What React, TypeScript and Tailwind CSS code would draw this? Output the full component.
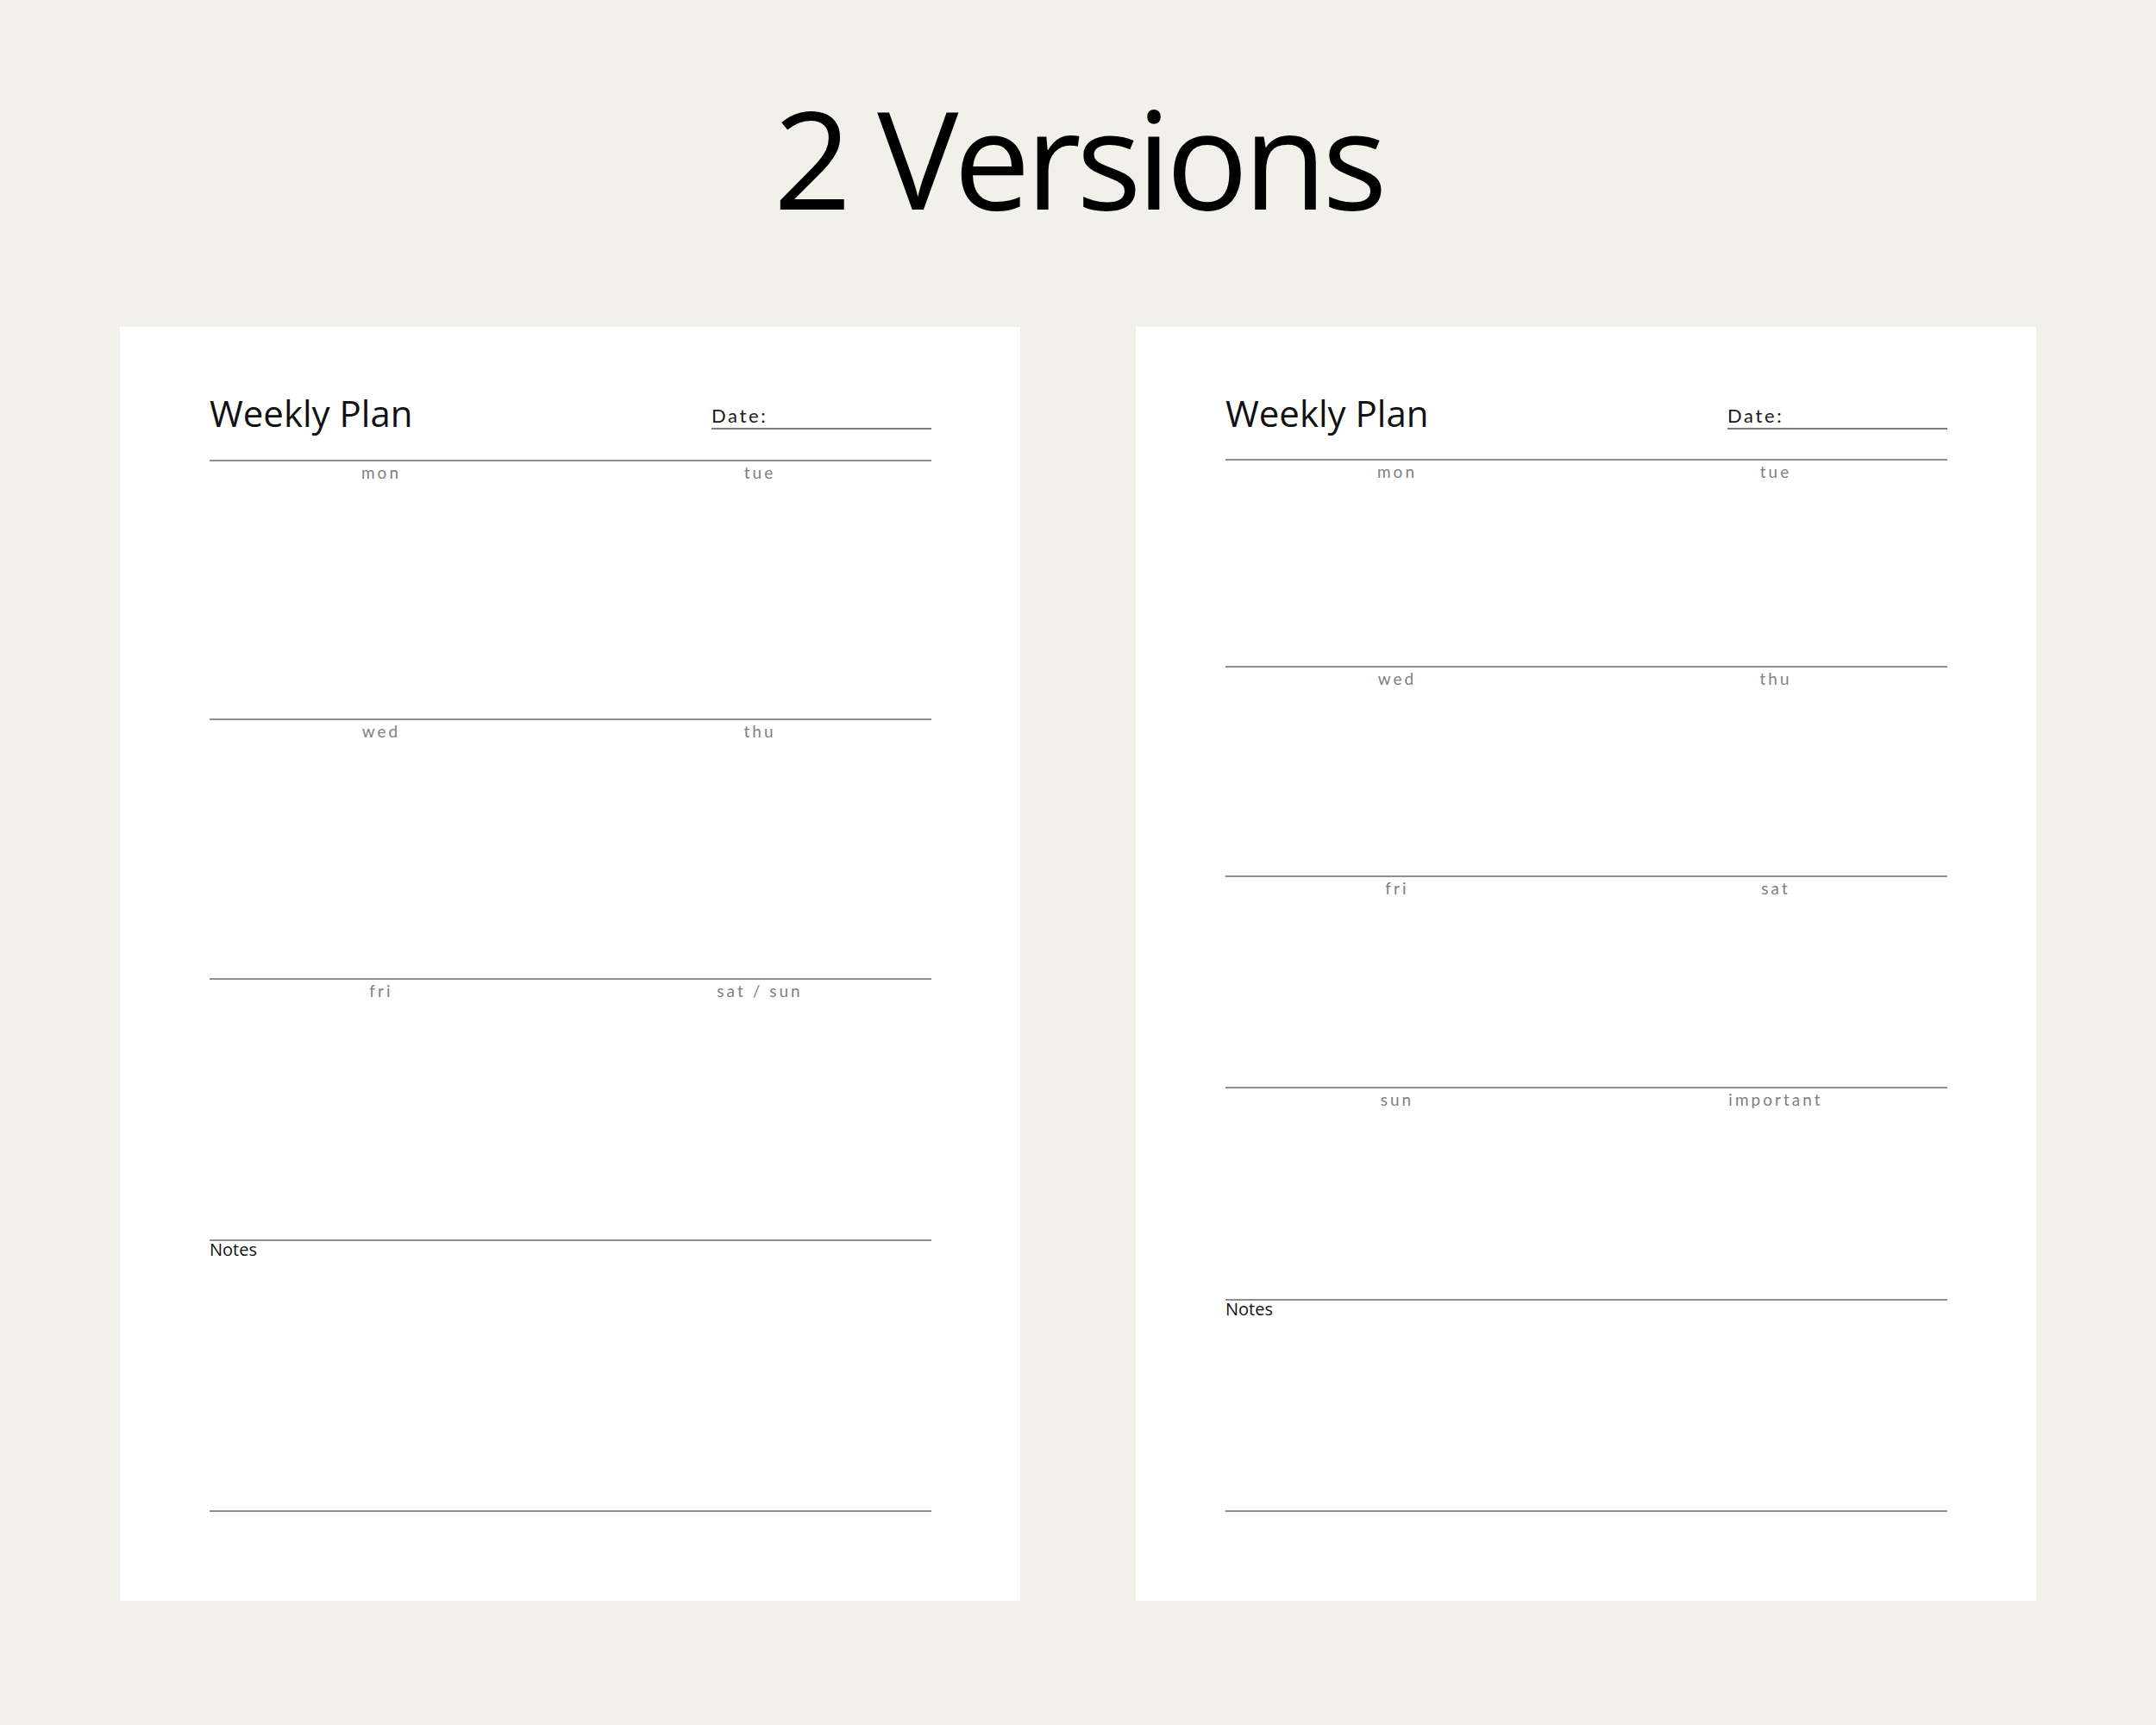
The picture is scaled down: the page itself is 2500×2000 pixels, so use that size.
const serif = "font-['Open_Sans','Noto_Sans',sans-serif]";
const label = "font-['Lato','Liberation_Sans',sans-serif]";

type Row = { h: string; left: string; right?: string; notes?: boolean };

const versionA: Row[] = [
  { h: 'h-[300px]', left: 'mon', right: 'tue' },
  { h: 'h-[301px]', left: 'wed', right: 'thu' },
  { h: 'h-[303px]', left: 'fri', right: 'sat / sun' },
  { h: 'h-[314px]', left: 'Notes', notes: true },
];

const versionB: Row[] = [
  { h: 'h-[240px]', left: 'mon', right: 'tue' },
  { h: 'h-[243px]', left: 'wed', right: 'thu' },
  { h: 'h-[245px]', left: 'fri', right: 'sat' },
  { h: 'h-[246px]', left: 'sun', right: 'important' },
  { h: 'h-[245px]', left: 'Notes', notes: true },
];

function Section({ row }: { row: Row }) {
  if (row.notes) {
    return (
      <div className={`${row.h} border-t-2 border-[#8e8e8e]`}>
        <p className={`${serif} text-[20px] leading-none text-[#111]`}>{row.left}</p>
      </div>
    );
  }
  return (
    <div className={`${row.h} border-t-2 border-[#8e8e8e]`}>
      <div
        className={`${label} mt-[3px] grid grid-cols-[398px_480px] text-[19px] leading-none tracking-[0.16em] text-[#808080]`}
      >
        <span className="text-center">{row.left}</span>
        <span className="text-center">{row.right}</span>
      </div>
    </div>
  );
}

function Planner({ rows, headerH }: { rows: Row[]; headerH: string }) {
  return (
    <div className="h-[1477px] w-[1044px] bg-white pl-[104px] pr-[103px] pt-[79px]">
      {/* Header */}
      <div className={`${headerH} flex items-start justify-between`}>
        <h2 className={`${serif} text-[42px] leading-none text-[#111]`}>Weekly Plan</h2>
        <div className="mt-[13px] w-[255px] border-b-2 border-[#7e7e7e]">
          <span className={`${label} text-[22px] leading-none tracking-[0.12em] text-[#1a1a1a]`}>
            Date:
          </span>
        </div>
      </div>

      {rows.map((row) => (
        <Section key={row.left + (row.right ?? '')} row={row} />
      ))}
      <div className="border-t-2 border-[#8e8e8e]" />
    </div>
  );
}

export default function App() {
  return (
    <div className="min-h-[2000px] w-[2500px] bg-[#f1f1e9] pt-[103px]">
      <h1 className={`${serif} text-center text-[158px] leading-none tracking-[-0.035em] text-black`}>
        2 Versions
      </h1>

      <div className="mt-[118px] flex justify-center gap-[134px]">
        <Planner rows={versionA} headerH="h-[75px]" />
        <Planner rows={versionB} headerH="h-[74px]" />
      </div>
    </div>
  );
}
